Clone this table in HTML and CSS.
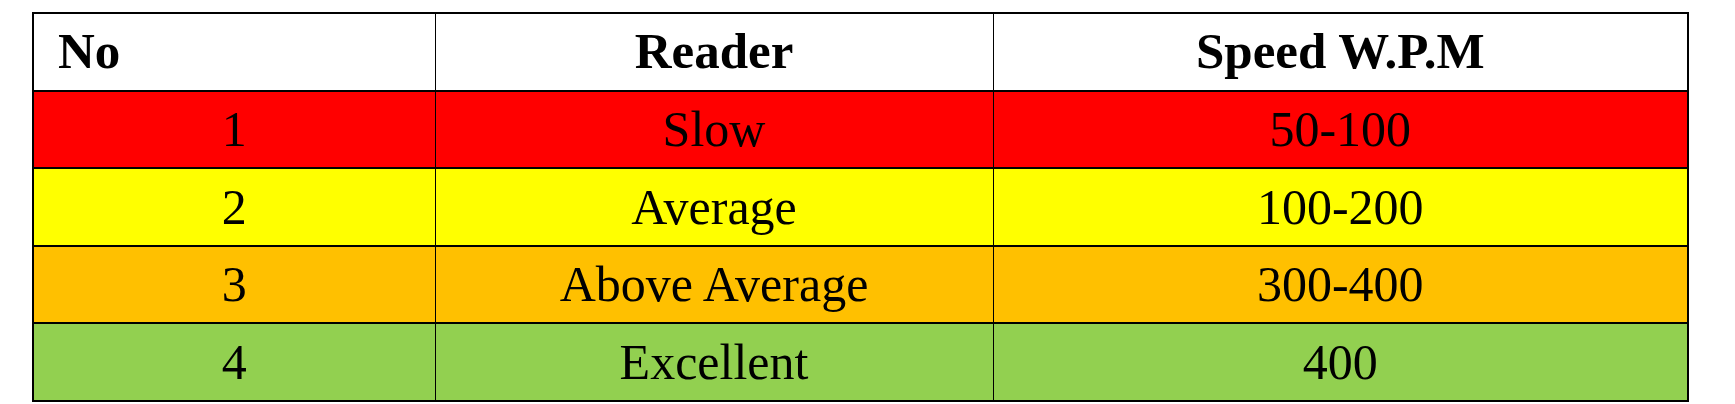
FILE: index.html
```html
<!DOCTYPE html>
<html lang="en">
<head>
<meta charset="utf-8">
<title>Reading Speed</title>
<link rel="stylesheet" href="styles.css">
</head>
<body>
<table class="speed-table">
  <colgroup>
    <col class="col-no">
    <col class="col-reader">
    <col class="col-speed">
  </colgroup>
  <thead>
    <tr class="row-head">
      <th class="cell-left">No</th>
      <th>Reader</th>
      <th>Speed W.P.M</th>
    </tr>
  </thead>
  <tbody>
    <tr class="row-red">
      <td>1</td>
      <td>Slow</td>
      <td>50-100</td>
    </tr>
    <tr class="row-yellow">
      <td>2</td>
      <td>Average</td>
      <td>100-200</td>
    </tr>
    <tr class="row-orange">
      <td>3</td>
      <td>Above Average</td>
      <td>300-400</td>
    </tr>
    <tr class="row-green">
      <td>4</td>
      <td>Excellent</td>
      <td>400</td>
    </tr>
  </tbody>
</table>
</body>
</html>
```

FILE: styles.css
```css
html, body {
  margin: 0;
  padding: 0;
  background: #ffffff;
}

body {
  padding: 12px 0 0 32px;
  font-family: "Liberation Serif", "Times New Roman", serif;
  color: #000000;
}

.speed-table {
  border-collapse: collapse;
  width: 1655px;
  table-layout: fixed;
  border: 2px solid #000000;
}

.col-no { width: 402px; }
.col-reader { width: 558px; }
.col-speed { width: 695px; }

.speed-table tr {
  height: 77.5px;
}

.speed-table th,
.speed-table td {
  border-top: 2px solid #000000;
  border-bottom: 2px solid #000000;
  border-left: 1.5px solid #000000;
  border-right: 1.5px solid #000000;
  padding: 0;
  text-align: center;
  vertical-align: middle;
  font-size: 50px;
  line-height: 1;
}

.speed-table th {
  font-weight: bold;
  font-size: 51px;
}

.speed-table td {
  font-weight: normal;
}

.speed-table .cell-left {
  text-align: left;
  padding-left: 24px;
}

.row-head { background: #ffffff; }
.row-red { background: #ff0000; }
.row-yellow { background: #ffff00; }
.row-orange { background: #ffc000; }
.row-green { background: #92d050; }
```
